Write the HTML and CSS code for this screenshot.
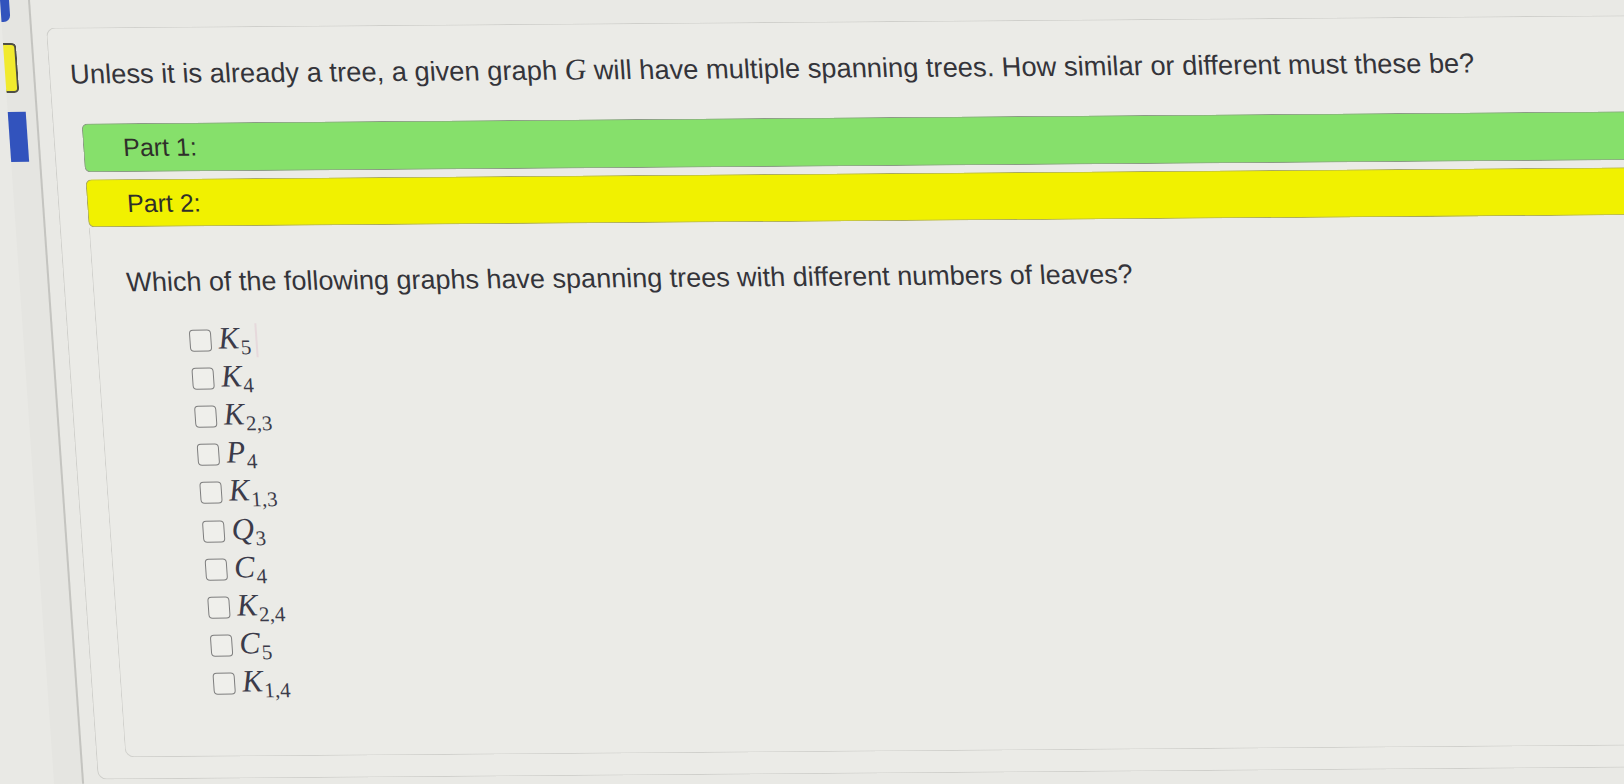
FILE: index.html
```html
<!DOCTYPE html>
<html lang="en">
<head>
    <meta charset="UTF-8">
    <meta name="viewport" content="width=device-width, initial-scale=1.0">
    <title>Spanning trees</title>
    <link rel="stylesheet" href="styles.css">
</head>
<body>
    <div class="screen">
        <div class="sidebar">
            <div class="mark blue top"></div>
            <div class="mark yellow"></div>
            <div class="mark blue"></div>
        </div>
        <div class="main">
            <div class="problem">
                <p class="question">Unless it is already a tree, a given graph <i class="var">G</i> will have multiple spanning trees. How similar or different must these be?</p>
                <div class="part done">Part 1:</div>
                <div class="part current">Part 2:</div>
                <div class="answer">
                    <p class="prompt">Which of the following graphs have spanning trees with different numbers of leaves?</p>
                    <ul class="choices">
                        <li><span class="box"></span><span class="math"><i>K</i><sub>5</sub></span><span class="caret"></span></li>
                        <li><span class="box"></span><span class="math"><i>K</i><sub>4</sub></span></li>
                        <li><span class="box"></span><span class="math"><i>K</i><sub>2,3</sub></span></li>
                        <li><span class="box"></span><span class="math"><i>P</i><sub>4</sub></span></li>
                        <li><span class="box"></span><span class="math"><i>K</i><sub>1,3</sub></span></li>
                        <li><span class="box"></span><span class="math"><i>Q</i><sub>3</sub></span></li>
                        <li><span class="box"></span><span class="math"><i>C</i><sub>4</sub></span></li>
                        <li><span class="box"></span><span class="math"><i>K</i><sub>2,4</sub></span></li>
                        <li><span class="box"></span><span class="math"><i>C</i><sub>5</sub></span></li>
                        <li><span class="box"></span><span class="math"><i>K</i><sub>1,4</sub></span></li>
                    </ul>
                </div>
            </div>
        </div>
    </div>
</body>
</html>
```

FILE: styles.css
```css
/* Page */
body {
    margin: 0;
    background-color: #e9e9e5;
    font-family: "Liberation Sans", Arial, sans-serif;
    color: #34343a;
    overflow: hidden;
}

/* the photo is taken at an angle, so lean the whole screen a little */
.screen {
    display: flex;
    height: 784px;
    transform-origin: 0 0;
    transform: skewX(3.5deg) rotate(-0.45deg);
}

/* Left strip with progress marks */
.sidebar {
    width: 28px;
    flex-shrink: 0;
    display: flex;
    flex-direction: column;
    border-right: 2px solid #c4c4c0;
    background-color: #e5e5e1;
}

.mark {
    background-color: #3253bd;
}

.mark.top {
    width: 9px;
    height: 22px;
    border-radius: 0 0 7px 0;
}

.mark.yellow {
    width: 11px;
    height: 46px;
    margin-top: 21px;
    background-color: #f1ea2e;
    border: 2px solid #4f4f46;
    border-left: none;
    border-radius: 0 5px 5px 0;
}

.mark.blue:last-child {
    width: 18px;
    height: 50px;
    margin-top: 19px;
}

/* Main column */
.main {
    flex: 1;
    padding: 28px 0 0 14px;
}

.problem {
    height: 752px;
    box-sizing: border-box;
    padding: 26px 0 0 20px;
    border: 1px solid #cfcfcb;
    border-right: none;
    border-radius: 9px 0 0 9px;
    background-color: #ebebe7;
}

.question {
    margin: 0 0 30px 0;
    font-size: 27.3px;
    line-height: 38px;
}

.var {
    font-family: "Liberation Serif", "Times New Roman", serif;
    font-size: 30px;
}

/* Part bars */
.part {
    height: 49px;
    box-sizing: border-box;
    margin-left: 8px;
    padding-left: 39px;
    line-height: 47px;
    font-size: 25px;
    color: #2f2f2a;
    border: 1px solid #8a9a84;
    border-right: none;
    border-radius: 6px 0 0 6px;
}

.part.done {
    background-color: #86e06b;
}

.part.current {
    height: 48px;
    margin-top: 7px;
    background-color: #f1f100;
    border-color: #a8a860;
}

/* Answer area */
.answer {
    height: 530px;
    box-sizing: border-box;
    margin-left: 8px;
    padding: 36px 0 0 33px;
    border: 1px solid #d0d0cc;
    border-top: none;
    border-right: none;
    border-radius: 0 0 0 9px;
}

.prompt {
    margin: 0 0 21px 0;
    font-size: 27px;
    line-height: 38px;
}

.choices {
    list-style: none;
    margin: 0;
    padding: 0 0 0 59px;
}

.choices li {
    display: flex;
    align-items: center;
    height: 38.1px;
}

.box {
    flex-shrink: 0;
    width: 20px;
    height: 20px;
    margin-right: 7px;
    border: 1.5px solid #7e7e7e;
    border-radius: 4px;
    background-color: #efefeb;
}

.math {
    font-family: "Liberation Serif", "Times New Roman", serif;
    font-size: 31px;
    color: #3b3b4a;
}

.math sub {
    margin-left: 1px;
    font-style: normal;
    font-size: 21px;
    vertical-align: -6px;
}

.caret {
    width: 2px;
    height: 34px;
    margin-left: 5px;
    background-color: #e6d9dc;
}
```
